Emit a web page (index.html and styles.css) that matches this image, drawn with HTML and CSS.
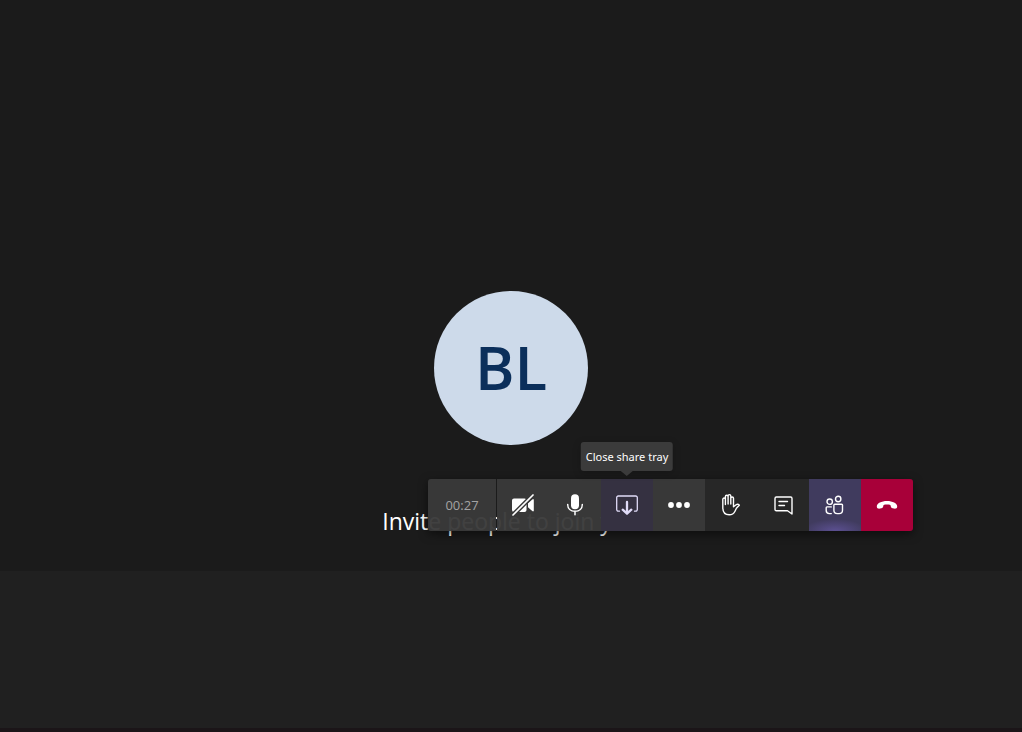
FILE: index.html
```html
<!DOCTYPE html>
<html lang="en">
<head>
<meta charset="utf-8">
<meta name="viewport" content="width=device-width, initial-scale=1">
<title>Meeting</title>
<link rel="stylesheet" href="styles.css">
</head>
<body>
<main class="meeting">
  <section class="stage">
    <div class="avatar">BL</div>
    <p class="invite">Invite people to join you</p>
    <div class="toolbar" role="toolbar" aria-label="Call controls">
      <div class="timer">00:27</div>
      <button class="control" type="button" aria-label="Turn camera on">
        <svg class="icon" viewBox="0 0 24 24"><path fill="currentColor" d="M3 5.500h10.500a2 2 0 0 1 2 2v9.500a2 2 0 0 1-2 2H3a2 2 0 0 1-2-2v-9.500a2 2 0 0 1 2-2zM17 10.300l4.500-4h1.300v12h-1.300l-4.500-4z"/><path stroke="#393939" stroke-width="4.500" d="M1.500 22.500 22.500 1.500"/><path stroke="currentColor" stroke-width="1.700" stroke-linecap="round" d="M2 22 22 2"/></svg>
      </button>
      <button class="control" type="button" aria-label="Mute">
        <svg class="icon" viewBox="0 0 24 24"><rect x="8" y="1.200" width="8" height="15" rx="4" fill="currentColor"/><path fill="none" stroke="currentColor" stroke-width="1.500" stroke-linecap="round" d="M4.700 11.500c0 4 3 6.800 7.300 6.800s7.300-2.800 7.300-6.800M12 18.500v3.200"/></svg>
      </button>
      <div class="share">
        <button class="control control-share" type="button" aria-describedby="share-tip" aria-label="Close share tray">
          <svg class="icon" viewBox="0 0 24 24"><path fill="none" stroke="currentColor" stroke-width="1.300" stroke-linecap="round" d="M4.500 18.200H3.300A1.600 1.600 0 0 1 1.700 16.600V4.600A1.600 1.600 0 0 1 3.300 3H20.700A1.600 1.600 0 0 1 22.300 4.600V16.600A1.600 1.600 0 0 1 20.700 18.200H19.500"/><path fill="none" stroke="currentColor" stroke-width="2.300" stroke-linecap="round" stroke-linejoin="round" d="M12 9v11.500M7.700 16.700 12 20.700l4.300-4"/></svg>
        </button>
        <div class="tooltip" id="share-tip" role="tooltip">Close share tray</div>
      </div>
      <button class="control" type="button" aria-label="More actions">
        <svg class="icon" viewBox="0 0 24 24"><g fill="currentColor"><circle cx="4" cy="12" r="2.900"/><circle cx="12" cy="12" r="2.900"/><circle cx="20" cy="12" r="2.900"/></g></svg>
      </button>
      <button class="control control-dark" type="button" aria-label="Raise hand">
        <svg class="icon" viewBox="0 0 24 24"><path fill="none" stroke="currentColor" stroke-width="1.400" stroke-linecap="round" stroke-linejoin="round" d="M6.400 11.500V6.300a1.300 1.300 0 0 0-2.600 0v8.200c0 4.600 2.500 7.300 6.400 7.300 2.800 0 4.600-1.200 5.800-3.600l1.400-2.900 2.900-3.100c-.7-1.200-2-1.300-3.200-.4l-2.600 2V5.300a1.300 1.300 0 0 0-2.700 0V11M6.400 11V3.600a1.300 1.300 0 0 1 2.700 0V11M9.100 10V3a1.300 1.300 0 0 1 2.700 0V11"/></svg>
      </button>
      <button class="control control-dark" type="button" aria-label="Show conversation">
        <svg class="icon" viewBox="0 0 24 24"><path fill="none" stroke="currentColor" stroke-width="1.400" stroke-linecap="round" stroke-linejoin="round" d="M5.400 4h14.200a1.400 1.400 0 0 1 1.400 1.400V21L16.500 17.800H5.400A1.400 1.400 0 0 1 4 16.400V5.400A1.400 1.400 0 0 1 5.400 4zM8 8.500h8.500M8 12.500h5.500"/></svg>
      </button>
      <button class="control control-people" type="button" aria-label="Show participants" aria-pressed="true">
        <svg class="icon" viewBox="0 0 24 24"><g fill="none" stroke="currentColor" stroke-width="1.400" stroke-linejoin="round" stroke-linecap="round"><circle cx="6.700" cy="8.700" r="2.700"/><circle cx="15.200" cy="6" r="2.700"/><path d="M11.700 11.200h7a.8.8 0 0 1 .8.800v5.200c0 2.200-1.400 3.400-3.400 3.400h-1.800c-2 0-3.400-1.200-3.400-3.400V12a.8.8 0 0 1 .8-.8zM8.300 13.900H4a.8.8 0 0 0-.8.800v2.800c0 2 1.300 3.100 3.200 3.100h1.900"/></g></svg>
      </button>
      <button class="control control-leave" type="button" aria-label="Leave">
        <svg class="icon" viewBox="0 0 24 24"><path fill="currentColor" d="M12 8c5.500 0 10.200 2.300 10.200 5.400 0 1.700-1.200 2.400-3.200 2.200-1.900-.2-3-.9-3.200-2.100-.1-1-.4-1.500-1-1.700-1.500-.5-4.100-.5-5.600 0-.6.200-.9.700-1 1.700-.2 1.200-1.300 1.900-3.200 2.100-2 .2-3.200-.5-3.200-2.200C1.800 10.300 6.500 8 12 8z"/></svg>
      </button>
    </div>
  </section>
  <section class="tray" aria-label="Share tray"></section>
</main>
</body>
</html>
```
FILE: styles.css
```css
* {
  box-sizing: border-box;
}

body {
  margin: 0;
  background: #202020;
  color: #fff;
  font-family: "Open Sans", "Noto Sans", sans-serif;
}

.meeting {
  display: flex;
  flex-direction: column;
  min-height: 100vh;
}

.stage {
  position: relative;
  flex: 1;
  display: flex;
  flex-direction: column;
  align-items: center;
  justify-content: flex-end;
  gap: 60px;
  padding-bottom: 34px;
  background: #1b1b1b;
}

.avatar {
  display: flex;
  align-items: center;
  justify-content: center;
  width: 154px;
  height: 154px;
  padding-bottom: 2px;
  border-radius: 50%;
  background: #cddaea;
  color: #0b2f5b;
  font-size: 60px;
  font-weight: 600;
}

.invite {
  margin: 0;
  font-size: 23px;
  line-height: 32px;
}

.toolbar {
  position: absolute;
  right: 109px;
  bottom: 40px;
  display: flex;
  border-radius: 3px;
  box-shadow: 0 3px 10px rgba(0, 0, 0, 0.5);
}

.timer {
  display: flex;
  align-items: center;
  justify-content: center;
  width: 68px;
  margin-right: 1px;
  border-radius: 3px 0 0 3px;
  background: rgba(57, 57, 57, 0.96);
  color: #a3a3a3;
  font-size: 13px;
  font-weight: 500;
}

.control {
  display: flex;
  align-items: center;
  justify-content: center;
  width: 52px;
  height: 52px;
  padding: 0;
  border: 0;
  background: rgba(57, 57, 57, 0.96);
  color: #fff;
}

.control-share {
  background: #353141;
  color: #e0dbf7;
}

.control-dark {
  background: #272727;
}

.control-people {
  background: radial-gradient(ellipse 32px 12px at 50% 100%, #5c5092, #403b5e);
}

.control-leave {
  border-radius: 0 3px 3px 0;
  background: #a80039;
}

.icon {
  width: 24px;
  height: 24px;
}

.share {
  position: relative;
}

.tooltip {
  position: absolute;
  bottom: 60px;
  left: 50%;
  padding: 6px 5px;
  border-radius: 3px;
  background: #3b3b3b;
  font-family: "Noto Sans", sans-serif;
  font-size: 11px;
  line-height: 17px;
  white-space: nowrap;
  transform: translateX(-50%);
  box-shadow: 0 2px 8px rgba(0, 0, 0, 0.2);
}

.tooltip::after {
  content: "";
  position: absolute;
  top: 100%;
  left: 50%;
  border: 6px solid transparent;
  border-top: 5px solid #3b3b3b;
  border-bottom: 0;
  transform: translateX(-50%);
}

.tray {
  height: 161px;
  border-bottom: 4px solid #1b1518;
  background: #202020;
}
```
